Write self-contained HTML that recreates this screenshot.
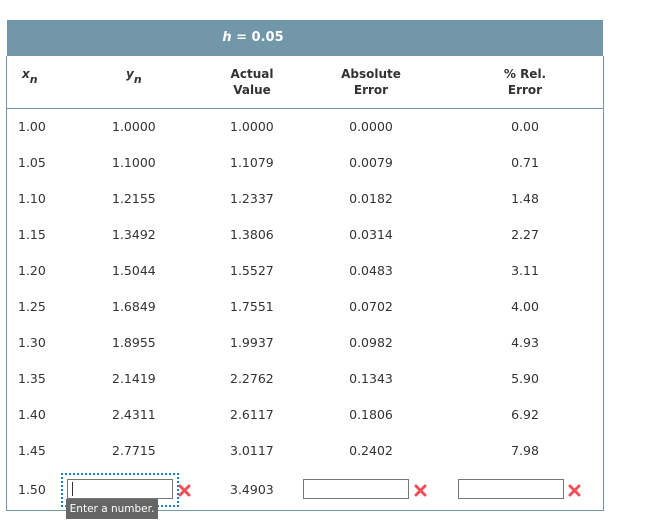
<!DOCTYPE html>
<html><head><style>
body{margin:0;width:660px;height:531px;background:#fff;position:relative;font-family:"DejaVu Sans","Liberation Sans",sans-serif;color:#333;overflow:hidden}
.a{position:absolute;font-size:12.5px;line-height:16px;white-space:nowrap}
.c{transform:translateX(-50%);text-align:center}
.h{font-weight:bold;font-size:12px;line-height:16px}
.inp{position:absolute;height:18px;border:1px solid #767676;background:#fff;box-sizing:content-box}
.x{position:absolute;width:13px;height:13px}
</style></head><body>
<div style="position:absolute;left:7px;top:20px;width:596px;height:36px;background:#7297a9"></div>
<div style="position:absolute;left:6px;top:56px;width:596px;height:454px;border:1px solid #7297a9;border-top:none"></div>
<div style="position:absolute;left:7px;top:108px;width:596px;height:1px;background:#7297a9"></div>
<div class="a c" style="left:253px;top:30px;color:#fff;font-weight:bold;font-size:13px"><i>h</i> = 0.05</div>
<div class="a h" style="left:22px;top:66px;font-style:italic">x<sub style="font-size:11px;vertical-align:-5px">n</sub></div>
<div class="a h" style="left:126px;top:66px;font-style:italic">y<sub style="font-size:11px;vertical-align:-5px">n</sub></div>
<div class="a c h" style="left:252px;top:66px">Actual<br>Value</div>
<div class="a c h" style="left:371px;top:66px">Absolute<br>Error</div>
<div class="a c h" style="left:525px;top:66px">% Rel.<br>Error</div>
<div id="rows"></div>
<script>
var d=[["1.00","1.0000","1.0000","0.0000","0.00"],["1.05","1.1000","1.1079","0.0079","0.71"],["1.10","1.2155","1.2337","0.0182","1.48"],["1.15","1.3492","1.3806","0.0314","2.27"],["1.20","1.5044","1.5527","0.0483","3.11"],["1.25","1.6849","1.7551","0.0702","4.00"],["1.30","1.8955","1.9937","0.0982","4.93"],["1.35","2.1419","2.2762","0.1343","5.90"],["1.40","2.4311","2.6117","0.1806","6.92"],["1.45","2.7715","3.0117","0.2402","7.98"]];
var h="";d.forEach(function(r,i){var t=119+i*36;
h+='<div class="a" style="left:18px;top:'+t+'px">'+r[0]+'</div><div class="a" style="left:112px;top:'+t+'px">'+r[1]+'</div><div class="a" style="left:230px;top:'+t+'px">'+r[2]+'</div><div class="a c" style="left:371px;top:'+t+'px">'+r[3]+'</div><div class="a c" style="left:525px;top:'+t+'px">'+r[4]+'</div>';});
document.getElementById("rows").outerHTML=h;
</script>
<div class="a" style="left:18px;top:482px">1.50</div>
<div class="a" style="left:230px;top:482px">3.4903</div>
<div style="position:absolute;left:61px;top:473px;width:114px;height:30px;border:2px dotted #1a7fd4"></div>
<div class="inp" style="left:67px;top:479px;width:104px"></div>
<div style="position:absolute;left:72px;top:482px;width:1px;height:14px;background:#333"></div>
<div class="inp" style="left:303px;top:479px;width:104px"></div>
<div class="inp" style="left:458px;top:479px;width:104px"></div>
<svg class="x" style="left:178px;top:484px" viewBox="0 0 13 13"><path d="M2 2L11 11M11 2L2 11" stroke="#ef4f58" stroke-width="3" stroke-linecap="round"/></svg>
<svg class="x" style="left:414px;top:484px" viewBox="0 0 13 13"><path d="M2 2L11 11M11 2L2 11" stroke="#ef4f58" stroke-width="3" stroke-linecap="round"/></svg>
<svg class="x" style="left:568px;top:484px" viewBox="0 0 13 13"><path d="M2 2L11 11M11 2L2 11" stroke="#ef4f58" stroke-width="3" stroke-linecap="round"/></svg>
<div style="position:absolute;left:66px;top:499px;width:92px;height:20px;background:#666;color:#fff;font-size:10.5px;line-height:20px;text-align:center">Enter a number.</div>
</body></html>
